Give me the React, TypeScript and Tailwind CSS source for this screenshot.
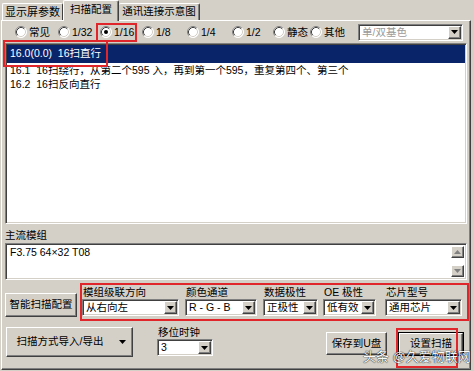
import React from "react";

const sunken =
  "border border-t-[#808080] border-l-[#808080] border-b-white border-r-white shadow-[inset_1px_1px_0_#404040,inset_-1px_-1px_0_#d4d0c8]";
const raised =
  "border border-t-white border-l-white border-b-[#404040] border-r-[#404040] shadow-[inset_-1px_-1px_0_#808080]";

function Radio({ checked = false }: { checked?: boolean }) {
  return (
    <svg width="12" height="12" viewBox="0 0 12 12" className="shrink-0">
      <circle cx="6" cy="6" r="5.5" fill="#fff" />
      <path d="M9.89 2.11 A5.5 5.5 0 0 0 2.11 9.89" stroke="#808080" fill="none" />
      <path d="M9.18 2.82 A4.5 4.5 0 0 0 2.82 9.18" stroke="#404040" fill="none" />
      <path d="M9.89 2.11 A5.5 5.5 0 0 1 2.11 9.89" stroke="#ffffff" fill="none" />
      <path d="M9.18 2.82 A4.5 4.5 0 0 1 2.82 9.18" stroke="#d4d0c8" fill="none" />
      {checked && <circle cx="6" cy="6" r="2" fill="#000" />}
    </svg>
  );
}

function DropBtn() {
  return (
    <div className={`w-[13px] h-[13px] bg-[#d4d0c8] ${raised} flex items-center justify-center shrink-0`}>
      <svg width="7" height="4" viewBox="0 0 7 4">
        <path d="M0 0h7L3.5 4z" fill="#000" />
      </svg>
    </div>
  );
}

function Combo({ text, cls, gray = false }: { text: string; cls: string; gray?: boolean }) {
  return (
    <div className={`${cls} h-[17px] ${sunken} bg-white flex items-center justify-between pl-[3px] pr-[1px]`}>
      <span className={`leading-none whitespace-nowrap ${gray ? "text-[#9a9a9a]" : "text-black"}`}>{text}</span>
      <DropBtn />
    </div>
  );
}

function Radios() {
  const items: [string, string, boolean][] = [
    ["常见", "w-[43px]", false],
    ["1/32", "w-[42px]", false],
    ["1/16", "w-[42px]", true],
    ["1/8", "w-[45px]", false],
    ["1/4", "w-[45px]", false],
    ["1/2", "w-[41px]", false],
    ["静态", "w-[37px]", false],
    ["其他", "w-[48px]", false],
  ];
  return (
    <div className="h-[22px] flex items-center pl-[10px]">
      {items.map(([t, w, c]) => (
        <div key={t} className={`${w} flex items-center`}>
          <Radio checked={c} />
          <span className="ml-[2px] leading-none">{t}</span>
        </div>
      ))}
      <Combo text="单/双基色" cls="w-[105px]" gray />
    </div>
  );
}

function ScrollBtn({ up }: { up: boolean }) {
  return (
    <div className={`w-[13px] h-[12px] bg-[#d4d0c8] ${raised} flex items-center justify-center`}>
      <svg width="7" height="4" viewBox="0 0 7 4">
        <path d={up ? "M0 4h7L3.5 0z" : "M0 0h7L3.5 4z"} fill="#808080" />
      </svg>
    </div>
  );
}

function Button({ children, cls }: { children: React.ReactNode; cls: string }) {
  return (
    <div className={`${cls} bg-[#d4d0c8] ${raised} flex items-center justify-center`}>{children}</div>
  );
}

export default function App() {
  return (
    <div className="relative w-[474px] h-[371px] bg-[#d4d0c8] overflow-hidden text-[10.5px] text-black font-['Liberation_Sans','Noto_Sans_CJK_SC',sans-serif]">
      {/* tab strip */}
      <div className="h-[20px] flex items-end pl-[2px]">
        <div className="h-[17px] w-[61px] flex items-center justify-center border-t border-l border-t-white border-l-white border-r border-r-[#404040] rounded-t-[2px] text-[11px]">
          显示屏参数
        </div>
        <div className="relative z-10 h-[21px] -mb-[1px] w-[56px] flex items-center justify-center bg-[#d4d0c8] border-t border-l border-t-white border-l-white border-r border-r-[#404040] shadow-[inset_-1px_0_0_#808080] rounded-t-[2px] pb-[2px]">
          扫描配置
        </div>
        <div className="h-[17px] w-[81px] flex items-center justify-center border-t border-t-white border-r border-r-[#404040] shadow-[inset_-1px_0_0_#808080] rounded-t-[2px]">
          通讯连接示意图
        </div>
      </div>

      {/* panel */}
      <div className="ml-[1px] w-[470px] h-[350px] border border-t-white border-l-white border-b-[#404040] border-r-[#404040] shadow-[inset_-1px_-1px_0_#808080] flex flex-col px-[3px]">
        <Radios />

        {/* list */}
        <div className={`h-[181px] bg-white ${sunken} p-[1px] flex flex-col`}>
          <div className="h-[18px] bg-[#0a246a] text-white flex items-center pl-[3px] whitespace-pre">
            {"16.0(0.0)  16扫直行"}
          </div>
          <div className="h-[14px] mt-[1px] flex items-center pl-[3px] whitespace-pre">
            {"16.1  16扫绕行，从第二个595 入，再到第一个595，重复第四个、第三个"}
          </div>
          <div className="h-[14px] flex items-center pl-[3px] whitespace-pre">{"16.2  16扫反向直行"}</div>
        </div>

        <div className="h-[14px] mt-[4px] leading-[14px]">主流模组</div>

        {/* textarea */}
        <div className={`mt-[1px] h-[37px] bg-white ${sunken} flex pl-[4px] pt-[2px] pb-[2px] pr-[2px]`}>
          <div className="flex-1 leading-[13px]">F3.75 64×32 T08</div>
          <div className="flex flex-col justify-between">
            <ScrollBtn up />
            <ScrollBtn up={false} />
          </div>
        </div>

        {/* config row */}
        <div className="mt-[3px] flex items-end">
          <Button cls="w-[72px] h-[24px] mb-[4px]">智能扫描配置</Button>
          <div className="ml-[3px] -mr-[2px] w-[389px] h-[38px] border-2 border-[#e0262a] flex">
            {[
              ["模组级联方向", "从右向左", "w-[97px]", "ml-[0px]"],
              ["颜色通道", "R - G - B", "w-[72px]", "ml-[6px]"],
              ["数据极性", "正极性", "w-[55px]", "ml-[6px]"],
              ["OE 极性", "低有效", "w-[53px]", "ml-[5px]"],
              ["芯片型号", "通用芯片", "w-[77px]", "ml-[9px]"],
            ].map(([l, v, w, m]) => (
              <div key={l} className={`${m} flex flex-col`}>
                <div className="h-[14px] leading-[14px] pl-[1px] whitespace-pre">{l}</div>
                <Combo text={v} cls={w} />
              </div>
            ))}
          </div>
        </div>

        {/* bottom row */}
        <div className="mt-[5px] flex items-start">
          <Button cls="w-[127px] h-[30px] ml-[1px] mt-[1px]">
            <span className="ml-[4px]">扫描方式导入/导出</span>
            <svg width="7" height="4" viewBox="0 0 7 4" className="ml-[16px]">
              <path d="M0 0h7L3.5 4z" fill="#000" />
            </svg>
          </Button>
          <div className="ml-[24px] flex flex-col">
            <div className="h-[13px] leading-[13px] pl-[1px]">移位时钟</div>
            <Combo text="3" cls="w-[56px]" />
          </div>
          <Button cls="ml-[113px] mt-[6px] w-[61px] h-[23px]">保存到U盘</Button>
          <div className="ml-[11px] mt-[6px] border border-black">
            <Button cls="w-[64px] h-[22px]">设置扫描</Button>
          </div>
        </div>
      </div>

      {/* annotations */}
      <div className="absolute left-[96px] top-[23px] w-[41px] h-[19px] border-2 border-[#e0262a]" />
      <div className="absolute left-[3px] top-[40px] w-[105px] h-[27px] border-2 border-[#e0262a]" />
      <div className="absolute left-[396px] top-[328px] w-[62px] h-[40px] border-2 border-[#e0262a]" />
      <div className="absolute left-[363px] top-[347px] text-[13px] text-white whitespace-pre [text-shadow:0_0_1px_#000,0_0_1px_#000] opacity-90">
        {"头条 @久爱物联网"}
      </div>
    </div>
  );
}
